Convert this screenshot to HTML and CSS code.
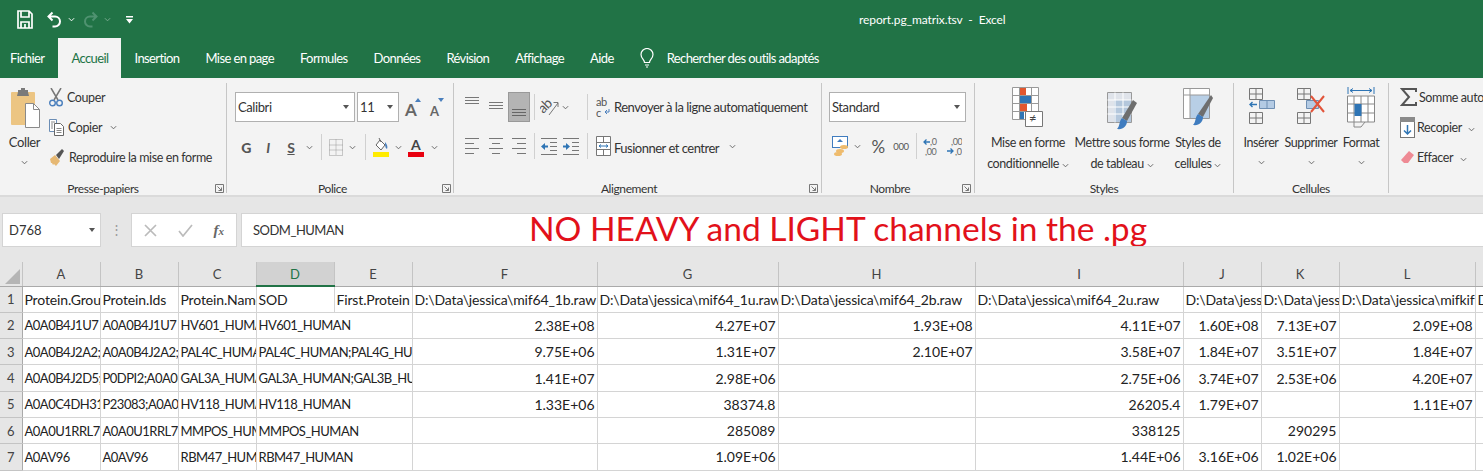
FILE: index.html
```html
<!DOCTYPE html>
<html lang="fr">
<head>
  <meta charset="UTF-8">
  <title>report.pg_matrix.tsv - Excel</title>
  <link rel="stylesheet" href="styles.css">
</head>
<body>

  <svg class="defs" width="0" height="0">
    <symbol id="chev" viewBox="0 0 8 5"><path d="M1 1l3 3 3-3" fill="none" stroke="currentColor" stroke-width="1.1"/></symbol>
    <symbol id="launch" viewBox="0 0 9 9"><path d="M.5 8.5v-8h8v8zM2.5 2.5l4 4M6.5 3.5v3h-3" fill="none" stroke="#777"/></symbol>
  </svg>

  <header class="titlebar">
    <div class="quick">
      <svg class="q-save" width="16" height="19" viewBox="0 0 16 19"><path d="M1 1h11l3 3v14H1zM4 1v6h8V1M4 18v-6h8v6M8 14v4" fill="none" stroke="#fff" stroke-width="1.7"/></svg>
      <svg class="q-undo" width="15" height="17" viewBox="0 0 15 17"><path d="M5.500 1.500L1.500 5.500l4 4M1.500 5.500H8a5 5 0 0 1 0 10H5.500" fill="none" stroke="#fff" stroke-width="2"/></svg>
      <svg class="q-chev" width="7" height="5"><use href="#chev"/></svg>
      <svg class="q-redo" width="15" height="17" viewBox="0 0 15 17"><path d="M9.500 1.500l4 4-4 4M13.500 5.500H7a5 5 0 0 0 0 10h2.500" fill="none" stroke="#4f9270" stroke-width="2"/></svg>
      <svg class="q-chev dim" width="7" height="5"><use href="#chev"/></svg>
      <svg class="q-more" width="7" height="9" viewBox="0 0 7 9"><path d="M0 1h7v1.500H0zM0 4h7L3.500 8.500z" fill="#fff"/></svg>
    </div>
    <div class="doc-title">report.pg_matrix.tsv &nbsp;-&nbsp; Excel</div>
  </header>

  <nav class="tabs">
    <span class="tab tab-file">Fichier</span>
    <span class="tab active">Accueil</span>
    <span class="tab">Insertion</span>
    <span class="tab">Mise en page</span>
    <span class="tab">Formules</span>
    <span class="tab">Données</span>
    <span class="tab">Révision</span>
    <span class="tab">Affichage</span>
    <span class="tab">Aide</span>
    <span class="tab tab-search">
      <svg width="14" height="20" viewBox="0 0 14 20"><path d="M4.500 14.500C4.500 11.500 1 10.500 1 6.500a6 6 0 0 1 12 0c0 4-3.500 5-3.500 8zM5 17h4M6 19h2" fill="none" stroke="#fff" stroke-width="1.200"/></svg>
      Rechercher des outils adaptés
    </span>
  </nav>

  <section class="ribbon">

    <div class="group g-clip">
      <div class="group-body clip-body">
        <div class="paste">
          <svg width="29" height="40" viewBox="0 0 29 40">
            <rect x="0" y="4" width="24" height="33" rx="1" fill="#ecc583"/>
            <path d="M7 4V2h3V0h4v2h3v2l1 4H6z" fill="#7a7a7a"/>
            <path d="M14.500 15.500h8l6 6v18h-14z" fill="#fff" stroke="#8a8a8a"/>
            <path d="M22.500 15.500v6h6" fill="none" stroke="#8a8a8a"/>
          </svg>
          <span>Coller</span>
          <svg class="chev-low" width="7" height="5"><use href="#chev"/></svg>
        </div>
        <div class="clip-list">
          <div class="clip-row">
            <svg width="14" height="19" viewBox="0 0 14 19"><path d="M2 0l7 12M12 0L5 12" stroke="#777" stroke-width="1.500" fill="none"/><circle cx="3.500" cy="15" r="2.800" fill="none" stroke="#4a7fbd" stroke-width="1.400"/><circle cx="10.500" cy="15" r="2.800" fill="none" stroke="#4a7fbd" stroke-width="1.400"/></svg>
            Couper
          </div>
          <div class="clip-row">
            <svg width="15" height="17" viewBox="0 0 15 17"><path d="M.5.500h7v12h-7z" fill="#fff" stroke="#6b8db5"/><path d="M5.500 4.500h6l3 3v9h-9z" fill="#fff" stroke="#666"/><path d="M7.500 9.500h5M7.500 11.500h5M7.500 13.500h5M2 3h4M2 5h2M2 7h2M2 9h2" stroke="#888"/></svg>
            Copier <svg class="chev-gap" width="7" height="5"><use href="#chev"/></svg>
          </div>
          <div class="clip-row">
            <svg width="16" height="18" viewBox="0 0 16 18"><path d="M1 11l5-4 5 6-4 5-2-2-1 1-1-2-1 0z" fill="#e6b873"/><path d="M7 7l6-6 2 2-5 8z" fill="#555"/></svg>
            Reproduire la mise en forme
          </div>
        </div>
      </div>
      <div class="group-foot foot-clip"><span>Presse-papiers</span><svg width="9" height="9"><use href="#launch"/></svg></div>
    </div>

    <div class="group g-font">
      <div class="group-body">
        <div class="tool-row top-row">
          <div class="combo combo-font">Calibri<i></i></div>
          <div class="combo combo-size">11<i></i></div>
          <svg class="tool w24" width="24" height="24" viewBox="0 0 24 24"><text x="6" y="21" class="svg-a big">A</text><path d="M16 7l3-4 3 4z" fill="#4a7fbd"/></svg>
          <svg class="tool w24" width="24" height="24" viewBox="0 0 24 24"><text x="7" y="21" class="svg-a">A</text><path d="M15 3h6l-3 4z" fill="#4a7fbd"/></svg>
        </div>
        <div class="tool-row low-row">
          <b class="tool w22 fmt">G</b>
          <i class="tool w22 fmt">I</i>
          <u class="tool w24 fmt">S</u>
          <span class="tool w12"><svg width="7" height="5"><use href="#chev"/></svg></span>
          <span class="sep-box w12"><em class="sep"></em></span>
          <span class="tool w18"><svg width="14" height="17" viewBox="0 0 14 17"><path d="M.5.500h13v16H.5zM.5 6h13M.5 11h13M7 .500v16" fill="none" stroke="#999" stroke-dasharray="1 1"/></svg></span>
          <span class="tool w14"><svg width="7" height="5"><use href="#chev"/></svg></span>
          <span class="sep-box w12"><em class="sep"></em></span>
          <span class="tool w20"><svg width="16" height="20" viewBox="0 0 16 20"><path d="M3 8l4-5 5 5-4 5z" fill="#fff" stroke="#666"/><path d="M6 1l2 4" stroke="#666"/><path d="M12 5c2 2 3 5 2 7-2-1-2-4-2-7z" fill="#4a7fbd"/><rect y="15" width="16" height="5" fill="#ffeb00"/></svg></span>
          <span class="tool w14"><svg width="7" height="5"><use href="#chev"/></svg></span>
          <span class="tool w22"><svg width="16" height="20" viewBox="0 0 16 20"><text x="3" y="13" class="svg-a small-a">A</text><rect y="15" width="16" height="5" fill="#e8000f"/></svg></span>
          <span class="tool w14"><svg width="7" height="5"><use href="#chev"/></svg></span>
        </div>
      </div>
      <div class="group-foot foot-font"><span>Police</span><svg width="9" height="9"><use href="#launch"/></svg></div>
    </div>

    <div class="group g-align">
      <div class="group-body">
        <div class="tool-row top-row">
          <span class="tool w22"><svg width="14" height="30" viewBox="0 0 14 30"><path d="M0 5.500h14M0 8.500h14M0 11.500h14" stroke="#777"/></svg></span>
          <span class="tool w25"><svg width="14" height="30" viewBox="0 0 14 30"><path d="M0 10.500h14M0 13.500h14M0 16.500h14" stroke="#777"/></svg></span>
          <span class="tool w22 pressed"><svg width="14" height="28" viewBox="0 0 14 28"><path d="M0 16.500h14M0 19.500h14M0 22.500h14" stroke="#666"/></svg></span>
          <span class="sep-box w8"><em class="sep"></em></span>
          <span class="tool w22"><svg width="19" height="20" viewBox="0 0 19 20"><text x="-1" y="13" class="svg-ab big-ab" transform="rotate(-45 6 10)">ab</text><path d="M9 18L18 6M13.500 5.500H18V10" fill="none" stroke="#777"/></svg></span>
          <span class="tool w10"><svg width="7" height="5"><use href="#chev"/></svg></span>
          <span class="sep-box w16 sep-push"><em class="sep"></em></span>
          <span class="tool w16"><svg width="15" height="21" viewBox="0 0 15 21"><text x="0" y="9" class="svg-ab">ab</text><text x="0" y="20" class="svg-ab">c</text><path d="M13 12v3H9M11 13l-2 2 2 2" fill="none" stroke="#4a7fbd"/></svg></span>
          <span class="ink ink-gap">Renvoyer à la ligne automatiquement</span>
        </div>
        <div class="tool-row low-row">
          <span class="tool w22"><svg width="14" height="18" viewBox="0 0 14 18"><path d="M0 1.500h14M0 6.500h9M0 11.500h14M0 16.500h9" stroke="#777"/></svg></span>
          <span class="tool w25"><svg width="14" height="18" viewBox="0 0 14 18"><path d="M0 1.500h14M3 6.500h8M0 11.500h14M3 16.500h8" stroke="#777"/></svg></span>
          <span class="tool w22"><svg width="14" height="18" viewBox="0 0 14 18"><path d="M0 1.500h14M5 6.500h9M0 11.500h14M5 16.500h9" stroke="#777"/></svg></span>
          <span class="sep-box w8"><em class="sep"></em></span>
          <span class="tool w22"><svg width="16" height="17" viewBox="0 0 16 17"><path d="M0 .500h16M0 16.500h16M9 4.500h7M9 8.500h7M9 12.500h7" stroke="#777"/><path d="M0 8.500l4-3.500v2.500h3v2H4V12z" fill="#2f75b5"/></svg></span>
          <span class="tool w22"><svg width="16" height="17" viewBox="0 0 16 17"><path d="M0 .500h16M0 16.500h16M9 4.500h7M9 8.500h7M9 12.500h7" stroke="#777"/><path d="M7 8.500L3 5v2.500H0v2h3V12z" fill="#2f75b5"/></svg></span>
          <span class="sep-box w10"><em class="sep"></em></span>
          <span class="tool w22"><svg width="15" height="20" viewBox="0 0 15 20"><path d="M.5.500h14v19H.5zM.5 6.500h14M.5 13.500h14M7.500.500v6M7.500 13.500v6" fill="#fff" stroke="#777"/><path d="M3 10h9M5 8.500L3 10l2 1.500M10 8.500l2 1.500-2 1.500" fill="none" stroke="#2f75b5"/></svg></span>
          <span class="ink ink-low">Fusionner et centrer</span>
          <span class="tool w26"><svg width="7" height="5"><use href="#chev"/></svg></span>
        </div>
      </div>
      <div class="group-foot foot-align"><span>Alignement</span><svg width="9" height="9"><use href="#launch"/></svg></div>
    </div>

    <div class="group g-num">
      <div class="group-body">
        <div class="tool-row top-row">
          <div class="combo combo-num">Standard<i></i></div>
        </div>
        <div class="tool-row low-row">
          <span class="tool w22"><svg width="17" height="20" viewBox="0 0 17 20"><rect x=".5" y=".5" width="15" height="11" fill="#fff" stroke="#3f7cbf"/><path d="M8 3l-3 3h6z" fill="#3f7cbf"/><ellipse cx="12" cy="11" rx="4" ry="2" fill="#eebb6d"/><ellipse cx="8" cy="15" rx="4" ry="2" fill="#eebb6d"/><ellipse cx="6" cy="18" rx="4" ry="2" fill="#eebb6d"/></svg></span>
          <span class="tool w12"><svg width="7" height="5"><use href="#chev"/></svg></span>
          <span class="tool w30 pct">%</span>
          <span class="tool w16 thou">000</span>
          <span class="sep-box w14"><em class="sep"></em></span>
          <span class="tool w16"><svg width="16" height="19" viewBox="0 0 16 19"><text x="7" y="8" class="svg-tiny">,0</text><text x="2" y="18" class="svg-tiny">,00</text><path d="M1 5h6M3.500 2.500L1 5l2.500 2.500" fill="none" stroke="#2f75b5" stroke-width="1.300"/></svg></span>
          <span class="tool w30"><svg width="16" height="19" viewBox="0 0 16 19"><text x="5" y="8" class="svg-tiny">,00</text><text x="9" y="18" class="svg-tiny">,0</text><path d="M1 14h6M4.500 11.500L7 14l-2.500 2.500" fill="none" stroke="#2f75b5" stroke-width="1.300"/></svg></span>
        </div>
      </div>
      <div class="group-foot foot-num"><span>Nombre</span><svg width="9" height="9"><use href="#launch"/></svg></div>
    </div>

    <div class="group g-styles">
      <div class="group-body big-tools">
        <div class="big-tool st-cond">
          <svg width="32" height="44" viewBox="0 -1 32 44">
            <path d="M.5.500h26v32H.5zM.5 8.500h26M.5 16.500h26M.5 24.500h26M7.500.5v32M19.500.5v32" fill="#fff" stroke="#999"/>
            <rect x="8" y="1" width="6" height="7" fill="#e1572f"/><rect x="8" y="9" width="11" height="7" fill="#2f75b5"/><rect x="8" y="17" width="7" height="7" fill="#e1572f"/><rect x="8" y="25" width="4" height="7" fill="#2f75b5"/>
            <path d="M13.500 24.500h17v15h-17z" fill="#fff" stroke="#777"/><text x="17" y="36" class="svg-ne">≠</text>
          </svg>
          <span>Mise en forme<br>conditionnelle <svg width="7" height="5"><use href="#chev"/></svg></span>
        </div>
        <div class="big-tool st-table">
          <svg width="30" height="44" viewBox="0 -6 30 44">
            <path d="M.5.500h24v30H.5z" fill="#dfe3ea" stroke="#999"/><rect x="7" y="8" width="17" height="22" fill="#b4c7dc"/>
            <path d="M.5 8h24M.5 15h24M.5 22h24M8 .500v30M16 .500v30" stroke="#fff" fill="none"/>
            <path d="M26 8l4 3-10 18-5-3z" fill="#6e6e6e"/><path d="M15 26l5 3c0 5-4 9-10 8 3-3 2-8 5-11z" fill="#3f7cbf"/>
          </svg>
          <span>Mettre sous forme<br>de tableau <svg width="7" height="5"><use href="#chev"/></svg></span>
        </div>
        <div class="big-tool st-cell">
          <svg width="30" height="44" viewBox="0 -2 30 44">
            <path d="M.5.500h26v30H.5z" fill="#fff" stroke="#999"/><rect x="7" y="7" width="19" height="23" fill="#b8cfe6"/>
            <path d="M.5 7h26M7 .500v30" stroke="#999" fill="none"/>
            <path d="M28 7l2 3-10 19-5-3z" fill="#6e6e6e"/><path d="M15 26l5 3c0 5-4 9-10 8 3-3 2-8 5-11z" fill="#3f7cbf"/>
          </svg>
          <span>Styles de<br>cellules <svg width="7" height="5"><use href="#chev"/></svg></span>
        </div>
      </div>
      <div class="group-foot foot-styles"><span>Styles</span></div>
    </div>

    <div class="group g-cells">
      <div class="group-body big-tools">
        <div class="big-tool ce-ins">
          <svg width="27" height="44" viewBox="0 -2 27 44">
            <path d="M1.500.500h13v11h-13zM8 .500v11M1.500 6h13M1.500 24.500h13v11h-13zM8 24.500v11M1.500 30h13" fill="none" stroke="#777"/>
            <path d="M11.500 12.500h15v8h-15zM19 12.500v8" fill="#b4cbe4" stroke="#6f8fb3"/>
            <path d="M2 16.500h7M4.500 14L2 16.500 4.500 19" fill="none" stroke="#2f75b5" stroke-width="1.400"/>
          </svg>
          <span>Insérer</span>
          <svg class="chev-low" width="7" height="5"><use href="#chev"/></svg>
        </div>
        <div class="big-tool ce-del">
          <svg width="30" height="44" viewBox="0 -2 30 44">
            <path d="M1.500.500h13v11h-13zM8 .500v11M1.500 6h13M1.500 24.500h13v11h-13zM8 24.500v11M1.500 30h13" fill="none" stroke="#777"/>
            <path d="M10.500 12.500h12v8h-12z" fill="#b4cbe4" stroke="#6f8fb3"/>
            <path d="M15 8l13 16M28 8L15 24" stroke="#e2543a" stroke-width="2"/>
          </svg>
          <span>Supprimer</span>
          <svg class="chev-low" width="7" height="5"><use href="#chev"/></svg>
        </div>
        <div class="big-tool ce-fmt">
          <svg width="28" height="44" viewBox="0 -1 28 44">
            <path d="M1 0v7M27 0v7M3 3.500h22M3 3.500l3-2M3 3.500l3 2M25 3.500l-3-2M25 3.500l-3 2" fill="none" stroke="#2f75b5"/>
            <path d="M.5 9h27v26H.5zM7 9v26M14 9v26M21 9v26M.5 17h27M.5 26h27" fill="#fff" stroke="#888"/>
            <rect x="7.500" y="17" width="7" height="12" fill="#2f75b5"/>
            <path d="M7 35v5h7l4-5" fill="none" stroke="#888"/>
          </svg>
          <span>Format</span>
          <svg class="chev-low" width="7" height="5"><use href="#chev"/></svg>
        </div>
      </div>
      <div class="group-foot foot-cells"><span>Cellules</span></div>
    </div>

    <div class="group g-edit">
      <div class="edit-row">
        <svg width="17" height="19" viewBox="0 0 17 19"><path d="M16 4V1H2l7 8-7 8h14v-3" fill="none" stroke="#555" stroke-width="2"/></svg>
        <span>Somme automatique</span>
      </div>
      <div class="edit-row">
        <svg width="15" height="21" viewBox="0 0 15 21"><rect x=".5" y="4.500" width="14" height="16" fill="#fff" stroke="#777"/><rect width="15" height="5" fill="#8a8a8a"/><path d="M7.500 8v9M4 13.500l3.500 3.500 3.500-3.500" fill="none" stroke="#2f75b5" stroke-width="1.500"/></svg>
        <span>Recopier <svg class="chev-gap" width="7" height="5"><use href="#chev"/></svg></span>
      </div>
      <div class="edit-row">
        <svg width="15" height="15" viewBox="0 0 15 15"><path d="M9 1l5 4-6 8H4L1 10z" fill="#ee8a94"/></svg>
        <span>Effacer <svg class="chev-gap" width="7" height="5"><use href="#chev"/></svg></span>
      </div>
    </div>
  </section>

  <section class="formula-bar">
    <div class="name-box">D768<i></i></div>
    <div class="dots">⋮</div>
    <div class="fx-box">
      <svg width="13" height="13" viewBox="0 0 13 13"><path d="M1 1l11 11M12 1L1 12" stroke="#bbb" stroke-width="1.700"/></svg>
      <svg width="15" height="13" viewBox="0 0 15 13"><path d="M1 7l4 5 9-11" fill="none" stroke="#bbb" stroke-width="1.700"/></svg>
      <span class="fx">f<small>x</small></span>
    </div>
    <div class="formula-input">
      <span class="formula-value">SODM_HUMAN</span>
      <span class="note">NO HEAVY and LIGHT channels in the .pg</span>
    </div>
  </section>

  <table class="sheet">
    <colgroup>
      <col class="c-rh"><col class="c-78"><col class="c-78"><col class="c-78"><col class="c-78"><col class="c-78">
      <col class="c-f"><col class="c-g"><col class="c-h"><col class="c-i"><col class="c-78"><col class="c-78"><col class="c-l"><col class="c-m">
    </colgroup>
    <thead>
      <tr>
        <th class="corner"><svg width="15" height="15" viewBox="0 0 15 15"><path d="M15 0v15H0z" fill="#b5b5b5"/></svg></th>
        <th>A</th><th>B</th><th>C</th><th class="col-sel">D</th><th>E</th><th>F</th><th>G</th><th>H</th><th>I</th><th>J</th><th>K</th><th>L</th><th></th>
      </tr>
    </thead>
    <tbody>
      <tr class="names">
        <th>1</th><td>Protein.Group</td><td>Protein.Ids</td><td>Protein.Names</td><td>SOD</td><td>First.Protein</td>
        <td>D:\Data\jessica\mif64_1b.raw</td><td>D:\Data\jessica\mif64_1u.raw</td><td>D:\Data\jessica\mif64_2b.raw</td><td>D:\Data\jessica\mif64_2u.raw</td>
        <td>D:\Data\jessica</td><td>D:\Data\jessica</td><td>D:\Data\jessica\mifkif</td><td>D:\Data</td>
      </tr>
      <tr>
        <th>2</th><td>A0A0B4J1U7</td><td>A0A0B4J1U7</td><td>HV601_HUMAN</td><td colspan="2">HV601_HUMAN</td>
        <td class="num">2.38E+08</td><td class="num">4.27E+07</td><td class="num">1.93E+08</td><td class="num">4.11E+07</td>
        <td class="num">1.60E+08</td><td class="num">7.13E+07</td><td class="num">2.09E+08</td><td></td>
      </tr>
      <tr>
        <th>3</th><td>A0A0B4J2A2;P0DN26</td><td>A0A0B4J2A2;P0DN26</td><td>PAL4C_HUMAN</td><td colspan="2">PAL4C_HUMAN;PAL4G_HUMAN</td>
        <td class="num">9.75E+06</td><td class="num">1.31E+07</td><td class="num">2.10E+07</td><td class="num">3.58E+07</td>
        <td class="num">1.84E+07</td><td class="num">3.51E+07</td><td class="num">1.84E+07</td><td></td>
      </tr>
      <tr>
        <th>4</th><td>A0A0B4J2D5;P0DPI2</td><td>P0DPI2;A0A0B4J2D5</td><td>GAL3A_HUMAN</td><td colspan="2">GAL3A_HUMAN;GAL3B_HUMAN</td>
        <td class="num">1.41E+07</td><td class="num">2.98E+06</td><td></td><td class="num">2.75E+06</td>
        <td class="num">3.74E+07</td><td class="num">2.53E+06</td><td class="num">4.20E+07</td><td></td>
      </tr>
      <tr>
        <th>5</th><td>A0A0C4DH31</td><td>P23083;A0A0C4DH31</td><td>HV118_HUMAN</td><td colspan="2">HV118_HUMAN</td>
        <td class="num">1.33E+06</td><td class="num">38374.8</td><td></td><td class="num">26205.4</td>
        <td class="num">1.79E+07</td><td></td><td class="num">1.11E+07</td><td></td>
      </tr>
      <tr>
        <th>6</th><td>A0A0U1RRL7</td><td>A0A0U1RRL7</td><td>MMPOS_HUMAN</td><td colspan="2">MMPOS_HUMAN</td>
        <td></td><td class="num">285089</td><td></td><td class="num">338125</td>
        <td></td><td class="num">290295</td><td></td><td></td>
      </tr>
      <tr>
        <th>7</th><td>A0AV96</td><td>A0AV96</td><td>RBM47_HUMAN</td><td colspan="2">RBM47_HUMAN</td>
        <td></td><td class="num">1.09E+06</td><td></td><td class="num">1.44E+06</td>
        <td class="num">3.16E+06</td><td class="num">1.02E+06</td><td></td><td></td>
      </tr>
    </tbody>
  </table>

</body>
</html>
```

FILE: styles.css
```css
html, body {
  margin: 0;
  height: 472px;
  overflow: hidden;
  background-color: #fff;
}

body {
  font-family: Lato, "Open Sans", sans-serif;
  font-size: 13px;
  color: #333;
}

svg {
  color: #666;
}

.defs {
  position: absolute;
}

/* title bar + tabs */
.titlebar {
  height: 38px;
  background-color: #217346;
  display: flex;
  align-items: center;
  color: #fff;
}

.quick {
  display: flex;
  align-items: center;
  width: 859px;
  flex: none;
  padding-left: 17px;
  box-sizing: border-box;
}

.q-undo {
  margin-left: 14px;
}

.q-chev {
  margin-left: 6px;
  color: #fff;
}

.q-redo {
  margin-left: 8px;
}

.q-more {
  margin-left: 15px;
}

.q-chev.dim {
  opacity: 0.4;
}

.doc-title {
  font-size: 12px;
  letter-spacing: -0.1px;
}

.tabs {
  height: 40px;
  background-color: #217346;
  display: flex;
  color: #fff;
  font-size: 13px;
  letter-spacing: -0.6px;
}

.tab {
  display: flex;
  align-items: center;
  gap: 13px;
  padding: 0 13px;
}

.tab-file {
  padding: 0 14px 0 10px;
}

.tab.active {
  background-color: #f3f3f3;
  color: #217346;
  padding: 0 13px;
}

/* ribbon */
.ribbon {
  height: 119px;
  background-color: #f3f3f3;
  border-bottom: 2px solid #dadada;
  box-sizing: border-box;
  display: flex;
  overflow: hidden;
  letter-spacing: -0.4px;
}

.group {
  flex: none;
  box-sizing: border-box;
  margin: 5px 0 2px;
  border-right: 1px solid #c6c6c6;
  display: flex;
  flex-direction: column;
}

.g-clip { width: 227px; }
.g-font { width: 227px; padding-left: 8px; }
.g-align { width: 368px; padding-left: 7px; }
.g-num { width: 153px; padding-left: 7px; }
.g-styles { width: 259px; }
.g-cells { width: 155px; }
.g-edit { flex: 1; border-right: none; padding: 0 0 0 11px; }

.group-body {
  flex: 1;
  min-height: 0;
}

.group-foot {
  height: 16px;
  padding-top: 6px;
  box-sizing: border-box;
  display: flex;
  align-items: center;
  font-size: 12px;
}

.group-foot span {
  flex: 1;
  text-align: center;
}

.group-foot svg {
  flex: none;
}

.foot-clip span { padding-right: 9px; }
.foot-clip svg { margin-right: 2px; }
.foot-font span { padding-right: 12px; }
.foot-font svg { margin-right: 2px; }
.foot-align span { padding-right: 12px; }
.foot-align svg { margin-right: 3px; }
.foot-num span { padding-right: 11px; }
.foot-num svg { margin-right: 3px; }

.clip-body {
  display: flex;
}

.paste {
  width: 49px;
  display: flex;
  flex-direction: column;
  align-items: center;
  padding-top: 5px;
  flex: none;
  box-sizing: border-box;
}

.paste span {
  margin-top: 6px;
}

.paste svg {
  margin-left: 2px;
}

.chev-low {
  display: block;
  margin-top: 10px;
}

.paste .chev-low {
  margin-left: 0;
}

.clip-list {
  display: flex;
  flex-direction: column;
  margin-top: -1px;
}

.clip-row {
  height: 30px;
  flex: none;
  display: flex;
  align-items: center;
  gap: 4px;
  font-size: 12.500px;
  white-space: nowrap;
}

.chev-gap {
  margin-left: 4px;
}

.tool-row {
  display: flex;
  align-items: center;
}

.top-row {
  height: 30px;
  margin-top: 9px;
}

.low-row {
  height: 30px;
  margin-top: 9px;
}

.g-font .low-row {
  margin-top: 10px;
}

.combo {
  height: 30px;
  box-sizing: border-box;
  border: 1px solid #b0b0b0;
  background-color: #fff;
  display: flex;
  align-items: center;
  justify-content: space-between;
  padding: 0 5px 0 2px;
  font-size: 13px;
}

.combo i,
.name-box i {
  width: 0;
  height: 0;
  border-left: 3px solid transparent;
  border-right: 3px solid transparent;
  border-top: 4px solid #555;
}

.combo-font { width: 120px; }
.combo-size { width: 42px; margin-left: 2px; }
.combo-num { width: 137px; }

.tool {
  display: flex;
  align-items: center;
  justify-content: center;
  flex: none;
}

.w8 { width: 8px; }
.w10 { width: 10px; }
.w12 { width: 12px; }
.w14 { width: 14px; }
.w16 { width: 16px; }
.w18 { width: 18px; }
.w20 { width: 20px; }
.w22 { width: 22px; }
.w24 { width: 24px; }
.w25 { width: 25px; }
.w26 { width: 26px; }
.w30 { width: 30px; }

.sep-box {
  display: flex;
  justify-content: center;
  flex: none;
}

.sep-push {
  margin-left: 9px;
}

.sep {
  width: 1px;
  height: 26px;
  background-color: #d0d0d0;
  display: block;
}

.fmt {
  font-family: Lato, sans-serif;
  font-size: 14px;
  color: #555;
}

b.fmt { font-weight: 900; }
i.fmt { font-weight: 700; }
u.fmt { font-weight: 700; }

.pressed {
  height: 30px;
  background-color: #b4b4b4;
  border: 1px solid #999;
  box-sizing: border-box;
}

.ink {
  white-space: nowrap;
  font-size: 13px;
  letter-spacing: -0.5px;
}

.ink-gap {
  margin-left: 3px;
}

.ink-low {
  padding-top: 4px;
}

.pct {
  font-size: 17px;
  color: #555;
}

.thou {
  font-size: 9.500px;
  color: #555;
}

.svg-a {
  font: 700 13px Lato, sans-serif;
  fill: #666;
}

.svg-a.big {
  font-size: 17px;
}

.svg-a.small-a {
  font-size: 14px;
  fill: #444;
}

.svg-ab {
  font: 11px Lato, sans-serif;
  fill: #555;
}

.svg-ab.big-ab {
  font-size: 14px;
}

.svg-tiny {
  font: 9px Lato, sans-serif;
  fill: #666;
}

.svg-ne {
  font: 13px Lato, sans-serif;
  fill: #444;
}

.big-tools {
  display: flex;
}

.big-tool {
  display: flex;
  flex-direction: column;
  align-items: center;
  flex: none;
  text-align: center;
  font-size: 12.500px;
  padding-top: 3px;
  box-sizing: border-box;
  line-height: 21px;
  white-space: nowrap;
}

.big-tool > svg:first-child {
  margin-bottom: 2px;
}

.st-cond { width: 106px; }
.st-table { width: 82px; }
.st-cell { width: 70px; }

.ce-ins { width: 54px; }
.ce-del { width: 46px; }
.ce-fmt { width: 54px; }

.big-tool .chev-low {
  margin-top: 7px;
}

.edit-row {
  height: 30px;
  flex: none;
  display: flex;
  align-items: center;
  gap: 2px;
  font-size: 12.500px;
  white-space: nowrap;
}

.edit-row:first-child {
  margin-top: -1px;
}

/* formula bar */
.formula-bar {
  height: 65px;
  background-color: #e6e6e6;
  display: flex;
  padding: 16px 0 15px 2px;
  box-sizing: border-box;
}

.name-box {
  width: 99px;
  background-color: #fff;
  border: 1px solid #d4d4d4;
  box-sizing: border-box;
  display: flex;
  align-items: center;
  justify-content: space-between;
  padding: 0 5px 0 6px;
  font-size: 13px;
}

.dots {
  width: 30px;
  text-align: center;
  line-height: 32px;
  color: #999;
}

.fx-box {
  width: 106px;
  flex: none;
  background-color: #fff;
  border: 1px solid #d4d4d4;
  box-sizing: border-box;
  display: flex;
  align-items: center;
  justify-content: space-between;
  padding: 0 12px;
}

.fx {
  font: italic 700 15px "Liberation Serif", serif;
  color: #666;
}

.fx small {
  font-size: 11px;
}

.formula-input {
  flex: 1;
  margin-left: 4px;
  margin-right: -2px;
  background-color: #fff;
  border: 1px solid #d4d4d4;
  border-right: none;
  display: flex;
  align-items: center;
  padding-left: 11px;
  font-size: 13px;
  letter-spacing: -0.5px;
  overflow: hidden;
}

.formula-value {
  width: 276px;
  flex: none;
}

.note {
  font-size: 33.500px;
  line-height: 32px;
  margin-bottom: 4px;
  letter-spacing: 0;
  color: #e2111a;
  white-space: nowrap;
}

/* sheet */
.sheet {
  table-layout: fixed;
  border-collapse: collapse;
  width: 1505px;
  background-color: #fff;
  font-size: 14px;
  color: #222;
}

.c-rh { width: 22px; }
.c-78 { width: 78px; }
.c-f { width: 185px; }
.c-g { width: 181px; }
.c-h { width: 197px; }
.c-i { width: 208px; }
.c-l { width: 136px; }
.c-m { width: 30px; }

.sheet thead tr {
  height: 24px;
}

.sheet tbody tr {
  height: 26.300px;
}

.sheet thead th {
  background-color: #e6e6e6;
  border-right: 1px solid #c4c4c4;
  border-bottom: 1px solid #aaa;
  font-weight: 400;
  font-size: 13px;
  color: #444;
  padding: 0;
}

.sheet .corner {
  text-align: right;
  vertical-align: bottom;
  line-height: 0;
}

.sheet .corner svg {
  margin: 0 2px 2px 0;
}

.sheet thead .col-sel {
  background-color: #d2d2d2;
  border-bottom: 2px solid #217346;
  color: #217346;
}

.sheet tbody th {
  background-color: #e6e6e6;
  border-right: 1px solid #aaa;
  border-bottom: 1px solid #c4c4c4;
  font-weight: 400;
  font-size: 13px;
  color: #444;
  padding: 0;
}

.sheet td {
  border-right: 1px solid #d4d4d4;
  border-bottom: 1px solid #d4d4d4;
  padding: 0 2px;
  overflow: hidden;
  white-space: nowrap;
  font-size: 13px;
  letter-spacing: -0.5px;
}

.sheet .names td {
  font-size: 14px;
  letter-spacing: -0.15px;
}

.sheet td.num {
  font-size: 14px;
  letter-spacing: 0;
  text-align: right;
}
```
